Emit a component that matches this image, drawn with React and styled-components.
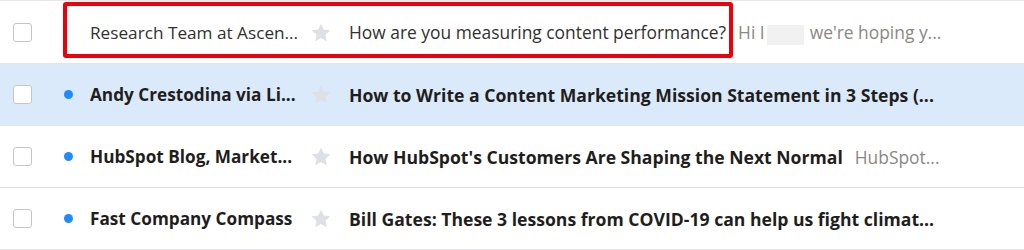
import React from 'react';
import styled, { createGlobalStyle } from 'styled-components';

const GlobalStyle = createGlobalStyle`
  body {
    margin: 0;
    background: #fff;
    font-family: "Open Sans", "Liberation Sans", sans-serif;
  }
`;

const List = styled.div`
  position: relative;
  width: 1024px;
  height: 250px;
  overflow: hidden;
  padding-top: 1px;
  box-sizing: border-box;
  border-top: 1px solid #e6e6ec;
`;

const Row = styled.div`
  display: flex;
  align-items: center;
  height: 61px;
  padding-left: 13px;
  background: ${(p) => (p.selected ? '#dbeafb' : '#fff')};
  border-bottom: 1px solid #e3e4ea;
  font-size: 17.4px;
  color: #252423;
`;

const Checkbox = styled.span`
  flex: none;
  width: 17px;
  height: 17px;
  border: 1.5px solid #c6c6c6;
  border-radius: 3px;
  background: #fff;
`;

const DotCell = styled.span`
  flex: none;
  display: flex;
  align-items: center;
  width: 58px;
  padding-left: 32px;
  box-sizing: border-box;
`;

const Dot = styled.span`
  width: 9px;
  height: 9px;
  border-radius: 50%;
  background: ${(p) => (p.unread ? '#1e8cff' : 'transparent')};
`;

const Sender = styled.span`
  flex: none;
  width: 221px;
  white-space: nowrap;
  overflow: hidden;
  font-size: 17.2px;
  font-weight: ${(p) => (p.unread ? 700 : 400)};
  color: ${(p) => (p.unread ? '#1f1e1d' : '#323130')};
`;

const StarButton = styled.span`
  flex: none;
  display: flex;
  width: 38px;
  color: #dde0e5;
`;

const Line = styled.span`
  flex: 1;
  min-width: 0;
  max-width: 600px;
  white-space: nowrap;
  overflow: hidden;
`;

const Subject = styled.span`
  font-size: ${(p) => (p.unread ? '17.6px' : '17.4px')};
  font-weight: ${(p) => (p.unread ? 700 : 400)};
  color: ${(p) => (p.unread ? '#1f1e1d' : '#323130')};
`;

const Preview = styled.span`
  margin-left: 12px;
  color: #8a8886;
`;

const Redacted = styled.span`
  display: inline-block;
  width: 37px;
  height: 20px;
  margin: 0 6px 0 2px;
  vertical-align: middle;
  background: #f1f1f1;
`;

const Highlight = styled.div`
  position: absolute;
  left: 63px;
  top: 1px;
  width: 670px;
  height: 56px;
  box-sizing: border-box;
  border: 4px solid #ec0009;
  border-radius: 3px;
  pointer-events: none;
`;

const Star = () => (
  <svg width="20" height="19" viewBox="0 0 24 23" fill="currentColor">
    <path d="M12 0.8l3.4 7.1 7.8 1-5.7 5.4 1.4 7.7L12 18.3 5.1 22l1.4-7.7L0.8 8.9l7.8-1z" />
  </svg>
);

const mails = [
  {
    sender: 'Research Team at Ascen...',
    subject: 'How are you measuring content performance?',
    preview: (
      <>
        Hi I<Redacted />we're hoping y...
      </>
    ),
  },
  {
    unread: true,
    selected: true,
    sender: 'Andy Crestodina via Li...',
    subject: 'How to Write a Content Marketing Mission Statement in 3 Steps (...',
  },
  {
    unread: true,
    sender: 'HubSpot Blog, Market...',
    subject: "How HubSpot's Customers Are Shaping the Next Normal",
    preview: 'HubSpot...',
  },
  {
    unread: true,
    sender: 'Fast Company Compass',
    subject: 'Bill Gates: These 3 lessons from COVID-19 can help us fight climat...',
  },
];

export default function App() {
  return (
    <>
      <GlobalStyle />
      <List>
        {mails.map((m, i) => (
          <Row key={i} selected={m.selected}>
            <Checkbox />
            <DotCell>
              <Dot unread={m.unread} />
            </DotCell>
            <Sender unread={m.unread}>{m.sender}</Sender>
            <StarButton>
              <Star />
            </StarButton>
            <Line>
              <Subject unread={m.unread}>{m.subject}</Subject>
              {m.preview && <Preview>{m.preview}</Preview>}
            </Line>
          </Row>
        ))}
        <Highlight />
      </List>
    </>
  );
}
